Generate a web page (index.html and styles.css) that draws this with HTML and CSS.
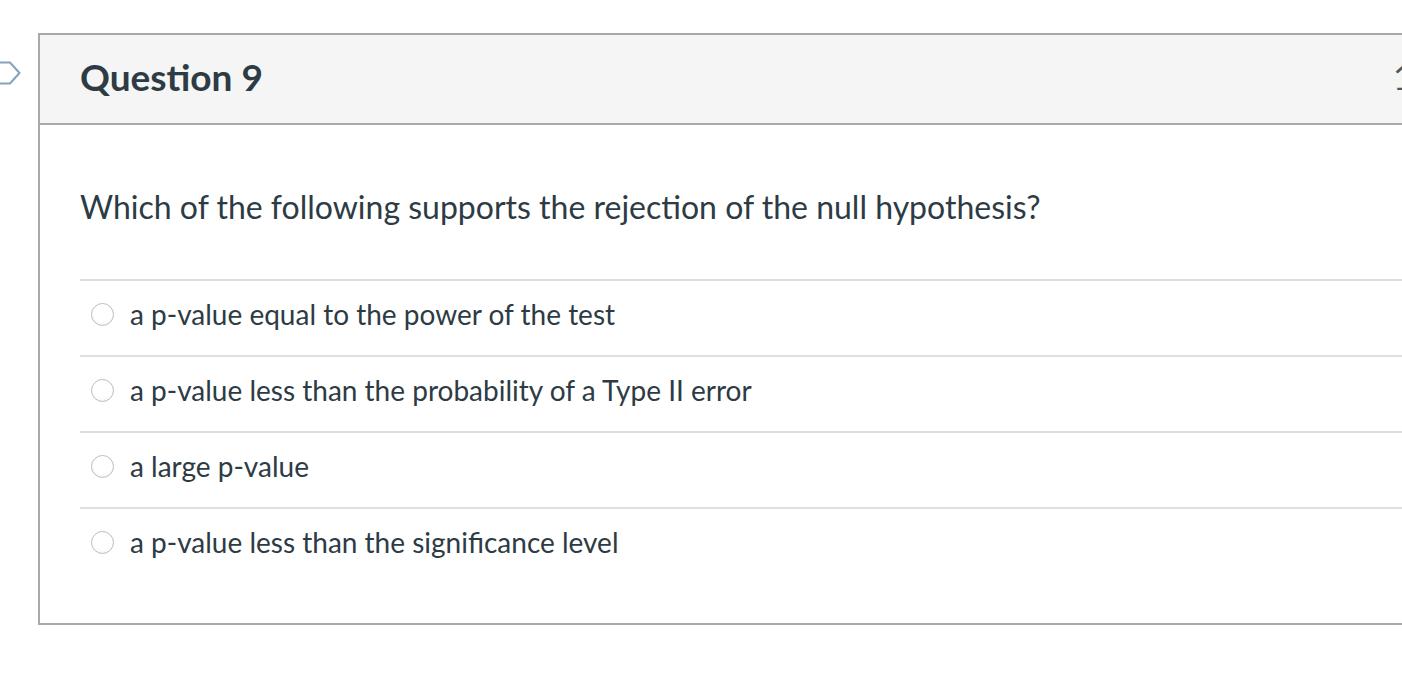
FILE: index.html
```html
<!DOCTYPE html>
<html lang="en">
<head>
    <meta charset="UTF-8">
    <title>Question 9</title>
    <link rel="stylesheet" href="styles.css">
</head>
<body>

    <div class="quiz">
        <!-- flag marker on the left -->
        <div class="gutter">
            <svg class="flag-icon" width="22" height="24" viewBox="0 0 22 24">
                <path d="M-2 1.5 H10 L19.5 12 L10 22.5 H-2" fill="none" stroke="#86a2bc" stroke-width="2" stroke-linejoin="round"/>
            </svg>
        </div>

        <div class="question-card">
            <div class="question-header">
                <h2 class="question-title">Question 9</h2>
                <span class="question-points">1 pts</span>
            </div>

            <div class="question-body">
                <p class="question-text">Which of the following supports the rejection of the null hypothesis?</p>

                <div class="answers">
                    <label class="answer">
                        <span class="radio"></span>
                        <span>a p-value equal to the power of the test</span>
                    </label>
                    <label class="answer">
                        <span class="radio"></span>
                        <span>a p-value less than the probability of a Type II error</span>
                    </label>
                    <label class="answer">
                        <span class="radio"></span>
                        <span>a large p-value</span>
                    </label>
                    <label class="answer">
                        <span class="radio"></span>
                        <span>a p-value less than the significance level</span>
                    </label>
                </div>
            </div>
        </div>
    </div>

</body>
</html>
```

FILE: styles.css
```css
body {
    margin: 0;
    background-color: #fff;
    font-family: Lato, "Open Sans", sans-serif;
    color: #2d3b45;
    overflow: hidden;
}
.quiz {
    display: flex;
    align-items: flex-start;
    padding-top: 33px;
}
.gutter {
    width: 38px;
    flex-shrink: 0;
}
.flag-icon {
    display: block;
    margin-top: 28px;
}
.question-card {
    flex-shrink: 0;
    width: 1500px;
    border: 2px solid #a9a9a9;
}
.question-header {
    display: flex;
    align-items: flex-start;
    box-sizing: border-box;
    height: 90px;
    background-color: #f5f5f5;
    border-bottom: 2px solid #a9a9a9;
    padding: 20px 0 0 40px;
}
.question-title {
    margin: 0;
    width: 1313px;
    font-size: 37px;
    font-weight: 700;
    line-height: 44px;
}
.question-points {
    font-size: 34px;
    line-height: 44px;
    color: #555;
}
.question-body {
    padding: 63px 0 40px 40px;
}
.question-text {
    margin: 0 0 53px;
    font-size: 32px;
    line-height: 38px;
}
.answer {
    display: flex;
    align-items: center;
    gap: 16px;
    box-sizing: border-box;
    height: 76px;
    border-top: 2px solid #dedede;
    padding: 0 0 8px 11px;
    font-size: 28px;
}
.radio {
    width: 21px;
    height: 21px;
    border-radius: 50%;
    border: 1px solid #bdbdbd;
    background: radial-gradient(circle at 50% 40%, #fff 55%, #ececec 100%);
}
```
